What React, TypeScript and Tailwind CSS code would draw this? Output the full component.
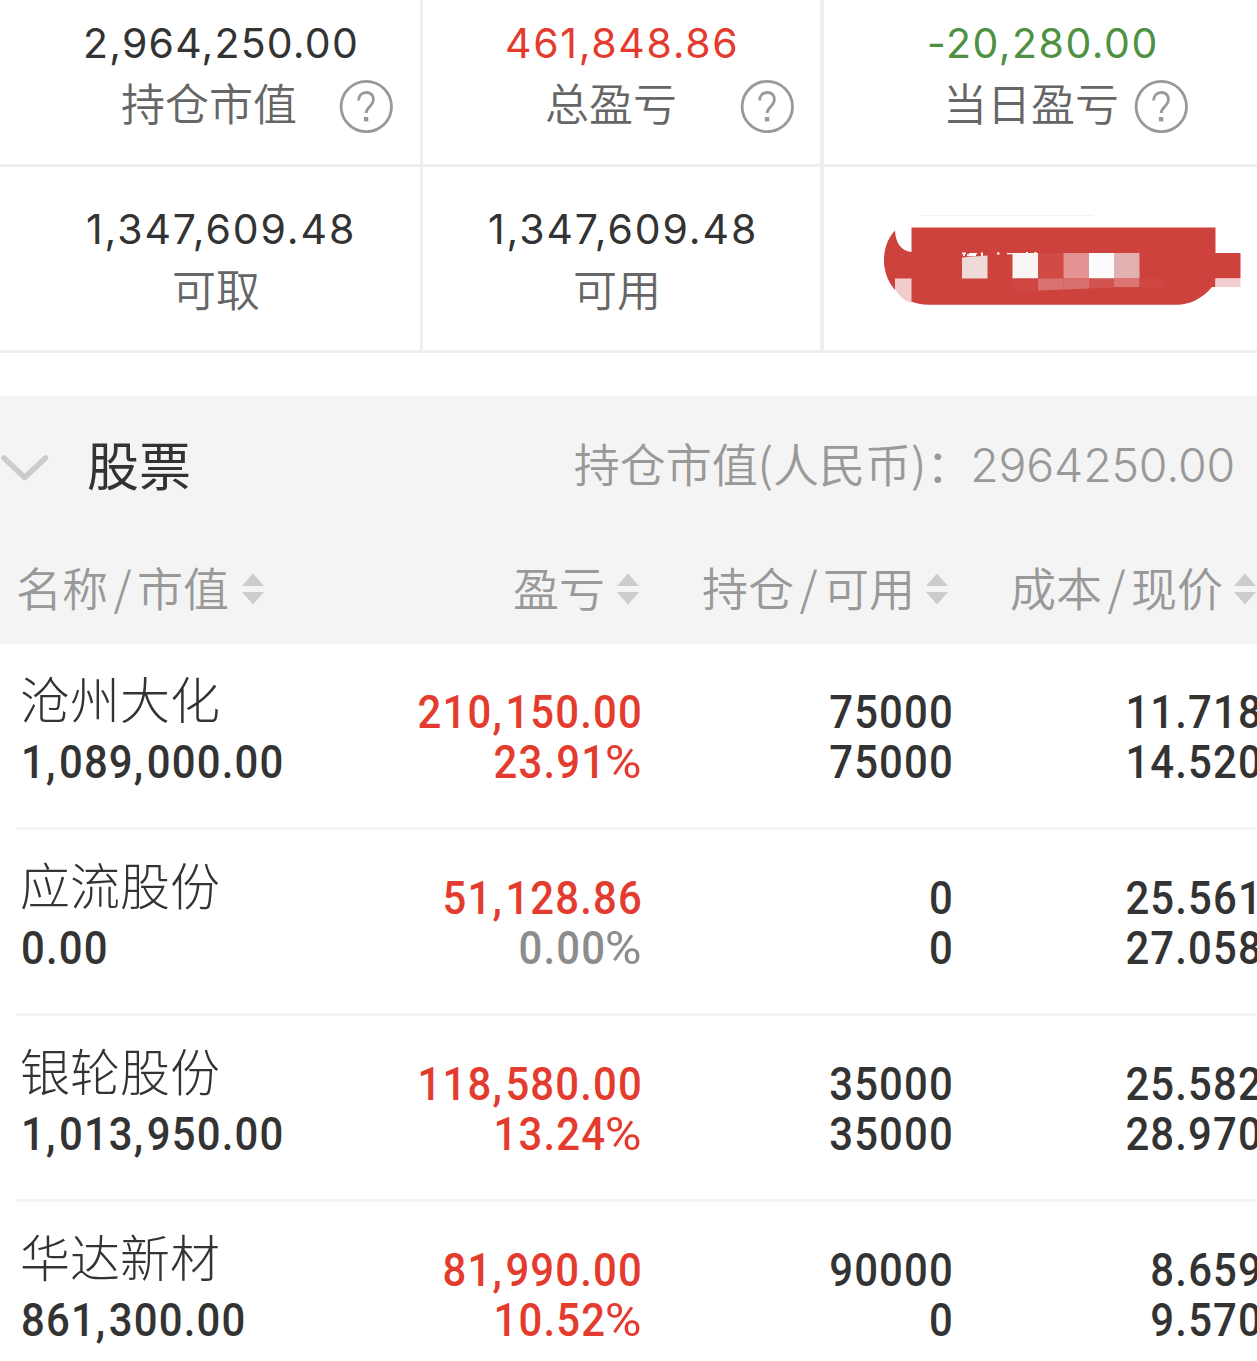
import React from "react";

const CJK = "font-['Noto_Sans_CJK_SC',sans-serif]";

function HelpIcon() {
  return (
    <svg width="54" height="54" viewBox="0 0 54 54" fill="none" className="block shrink-0">
      <circle cx="27.300" cy="27.500" r="25.200" stroke="#999" strokeWidth="2.800" />
      <path
        d="M19.700 21.500c0-5 3-8 7.600-8 4.400 0 7.100 2.700 7.100 6.900 0 3-1.500 4.700-3.600 7.100-2.300 2.500-3.600 3.800-3.600 6.600"
        stroke="#999"
        strokeWidth="2.800"
      />
      <rect x="24.900" y="38" width="4.400" height="4.400" fill="#999" />
    </svg>
  );
}

function SortIcon() {
  return (
    <svg width="22" height="32" viewBox="0 0 22 32" fill="#ccc" className="block shrink-0">
      <path d="M11 0.500 22 13H0z" />
      <path d="M11 31.500 22 19H0z" />
    </svg>
  );
}

/* Condensed figures used in the holdings table. */
function Figure({ value, align = "right", tone = "text-[#333]" }: { value: string; align?: "left" | "right"; tone?: string }) {
  return (
    <div
      className={`font-['Roboto',sans-serif] text-[46.5px] leading-[50px] font-medium whitespace-nowrap scale-x-[0.9] tracking-[1.3px] ${
        align === "left" ? "origin-left text-left" : "-mr-[1px] origin-right text-right"
      } ${tone}`}
    >
      {value.split(/([,%])/).map((part, i) =>
        part === "," ? (
          <span key={i} className="tracking-[4px]">
            ,
          </span>
        ) : part === "%" ? (
          <span key={i} className="inline-block w-[41px] origin-right scale-x-[1.2] font-normal">
            %
          </span>
        ) : (
          part
        ),
      )}
    </div>
  );
}

function Summary({
  value,
  label,
  help = false,
  tone = "text-[#333]",
  tracking,
  valuePad,
  labelPad,
  gap = "",
}: {
  value: string;
  label: string;
  help?: boolean;
  tone?: string;
  tracking: string;
  valuePad: string;
  labelPad: string;
  gap?: string;
}) {
  return (
    <>
      <div className={`font-['Inter',sans-serif] text-[41px] leading-[50px] whitespace-nowrap ${tracking} ${valuePad} ${tone}`}>{value}</div>
      <div className={`flex h-[54px] items-start whitespace-nowrap ${labelPad} ${gap}`}>
        <span className={`${CJK} -mt-px text-[44px] leading-[48px] font-[350] text-[#666]`}>{label}</span>
        {help && <HelpIcon />}
      </div>
    </>
  );
}

function TransferButton() {
  return (
    <svg width="370" height="100" viewBox="880 210 370 100" className="ml-[56px] block">
      <path d="M920 215.500H1093" stroke="#f7f2f2" strokeWidth="1" />
      <path
        d="M895 230.500C895.500 243 901 251 911.500 252V227.500H1215.500V253H1240.500V278.500H1215.500V287H1212C1202 299 1190 304.700 1177 304.700H929C900 304.700 884 283 884 260C884 248 888 238 895 230.500Z"
        fill="#cd423c"
      />
      <path d="M1215.500 278.500H1240.500V287H1215.500Z" fill="#f1cdcd" />
      <path d="M895 278.500H911.500V303C903 301 898 296 895 290Z" fill="#f1cdcd" />
      <path d="M895 289C888 281 884 271 884 260V310H911.500V303C904 301 899 296 895 289Z" fill="#fff" />
      <path d="M884 260C884 271 888 282 895 290V260Z" fill="#cd423c" />
      <path d="M962 257.500 987.500 255.500V278.500H962Z" fill="#efdada" />
      <path d="M1012.500 253H1038V278.500H1012.500Z" fill="#faf5f5" />
      <path d="M1038 253H1063.500V278.500H1038Z" fill="#d04b46" />
      <path d="M1063.500 253H1089V278.500H1063.500Z" fill="#e59392" />
      <path d="M1089 253H1114V278.500H1089Z" fill="#fdfcfd" />
      <path d="M1114 253H1139.500V278.500H1114Z" fill="#e2b0b0" />
      <path d="M1012.500 278.500H1038V291.500L1012.500 292Z" fill="#ce4541" />
      <path d="M1038 278.500H1063.500V289.500L1038 290.500Z" fill="#d97270" />
      <path d="M1063.500 278.500H1089V288.500L1063.500 289.500Z" fill="#d8706e" />
      <path d="M1089 278.500H1114V287.500L1089 288.500Z" fill="#d15350" />
      <path d="M1114 278.500H1139.500V287H1114Z" fill="#dc7572" />
      <path d="M1139.500 278.500H1165V287H1139.500Z" fill="#cf4642" />
      <path
        d="M962 252.500h4v1.500h-4zM963 254h2v2h-2zM969 253h8v1.200h-8zM967 254.200h9v2h-9zM981 252.500h2v3.500h-2zM997 252.500h2.500v2h-2.500zM1007 253h9v1.300h-9zM1026 252h2v2h-2zM1034.500 252h2v2h-2z"
        fill="#fff"
      />
    </svg>
  );
}

function HeaderCell({ label, gap = "gap-[13px]" }: { label: string; gap?: string }) {
  return (
    <div className={`flex items-center justify-end ${gap}`}>
      <span className={`${CJK} -mt-[6px] text-[46px] leading-[60px] font-[350] whitespace-nowrap text-[#999]`}>
        {label.split(/(\/)/).map((part, i) =>
          part === "/" ? (
            <span key={i} className="mx-[5.5px]">
              /
            </span>
          ) : (
            part
          ),
        )}
      </span>
      <SortIcon />
    </div>
  );
}

const holdings = [
  { name: "沧州大化", value: "1,089,000.00", profit: "210,150.00", rate: "23.91%", held: "75000", free: "75000", cost: "11.718", price: "14.520" },
  { name: "应流股份", value: "0.00", profit: "51,128.86", rate: "0.00%", held: "0", free: "0", cost: "25.561", price: "27.058" },
  { name: "银轮股份", value: "1,013,950.00", profit: "118,580.00", rate: "13.24%", held: "35000", free: "35000", cost: "25.582", price: "28.970" },
  { name: "华达新材", value: "861,300.00", profit: "81,990.00", rate: "10.52%", held: "90000", free: "0", cost: "8.659", price: "9.570" },
];

const RED = "text-[#e43b2f]";

export default function App() {
  return (
    <div className="h-[1361px] w-[1257px] overflow-hidden bg-white">
      <section className="grid grid-cols-[423px_401px_433px] grid-rows-[167px_186px]">
        <div className="border-r-3 border-b-3 border-[#eee] pt-[18px]">
          <Summary value="2,964,250.00" label="持仓市值" help tracking="tracking-[1.2px]" valuePad="pl-[83px]" labelPad="pl-[121px] mt-[11px]" gap="gap-[42px]" />
        </div>
        <div className="border-r-4 border-b-3 border-[#eee] pt-[18px]">
          <Summary value="461,848.86" label="总盈亏" help tone={RED} tracking="tracking-[1.7px]" valuePad="pl-[82px]" labelPad="pl-[122px] mt-[11px]" gap="gap-[63px]" />
        </div>
        <div className="border-b-3 border-[#eee] pt-[18px]">
          <Summary value="-20,280.00" label="当日盈亏" help tone="text-[#4f9143]" tracking="tracking-[1.5px]" valuePad="pl-[103px]" labelPad="pl-[119px] mt-[11px]" gap="gap-[15px]" />
        </div>
        <div className="border-r-3 border-b-3 border-[#eee] pt-[37px]">
          <Summary value="1,347,609.48" label="可取" tracking="tracking-[1.9px]" valuePad="pl-[86px]" labelPad="pl-[172px] mt-[11px]" />
        </div>
        <div className="border-r-4 border-b-3 border-[#eee] pt-[37px]">
          <Summary value="1,347,609.48" label="可用" tracking="tracking-[1.9px]" valuePad="pl-[65px]" labelPad="pl-[150px] mt-[11px]" />
        </div>
        <div className="border-b-3 border-[#eee] pt-[43px]">
          <TransferButton />
        </div>
      </section>

      <section className="mt-[43px] h-[248px] bg-[#f4f4f4]">
        <div className="flex h-[140px] items-center">
          <svg width="50" height="30" viewBox="0 0 50 30" fill="none" className="mt-[5px] block">
            <path d="M4 4 24.700 23.500 45.500 4" stroke="#ccc" strokeWidth="5.500" strokeLinecap="round" strokeLinejoin="round" />
          </svg>
          <h2 className={`${CJK} -mt-[4px] ml-[37px] text-[52px] leading-[70px] font-normal text-[#333]`}>股票</h2>
          <div className="mr-[22px] ml-auto flex items-center text-[#999]">
            <span className={`${CJK} -mt-[8px] -mr-[2px] text-[46px] leading-[60px] font-[350]`}>持仓市值(人民币)：</span>
            <span className="-mt-[3px] font-['Inter',sans-serif] text-[46.5px] leading-[60px] font-[350] tracking-[-0.2px]">2964250.00</span>
          </div>
        </div>
        <div className="grid h-[106px] grid-cols-[264px_375px_309px_308px] items-center">
          <HeaderCell label="名称/市值" />
          <HeaderCell label="盈亏" gap="gap-[12px]" />
          <HeaderCell label="持仓/可用" gap="gap-[11px]" />
          <HeaderCell label="成本/现价" gap="gap-[11px]" />
        </div>
      </section>

      <section>
        {holdings.map((h) => (
          <div key={h.name} className="ml-[15px] grid h-[186px] grid-cols-[306px_321px_311px_309px] border-b-3 border-[#f4f4f4]">
            <div className="pt-[23px] pl-[6px]">
              <div className={`${CJK} -ml-px h-[70px] text-[50px] leading-[60px] font-light text-[#333]`}>{h.name}</div>
              <Figure value={h.value} align="left" />
            </div>
            <div className="pt-[43px]">
              <Figure value={h.profit} tone={RED} />
              <Figure value={h.rate} tone={h.rate === "0.00%" ? "text-[#8c8c8c]" : RED} />
            </div>
            <div className="pt-[43px]">
              <Figure value={h.held} />
              <Figure value={h.free} />
            </div>
            <div className="pt-[43px]">
              <Figure value={h.cost} />
              <Figure value={h.price} />
            </div>
          </div>
        ))}
      </section>
    </div>
  );
}
